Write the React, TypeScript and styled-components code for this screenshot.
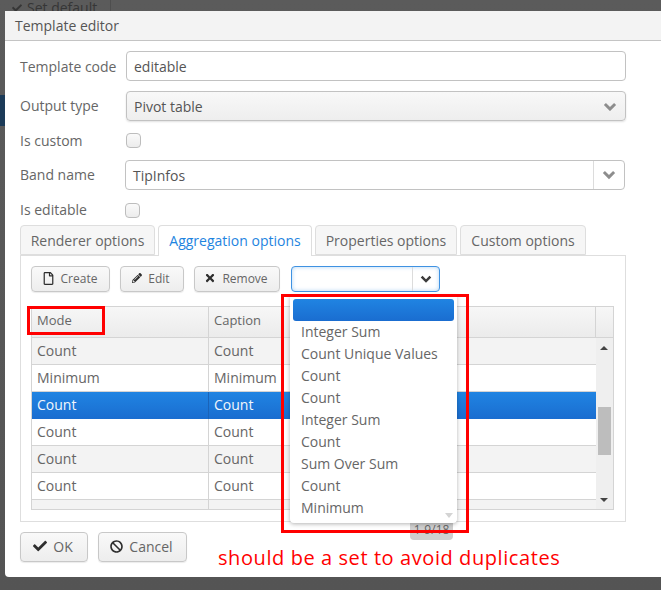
import React from "react";
import styled, { createGlobalStyle } from "styled-components";
import { FaRegFile, FaPencilAlt, FaTimes, FaCheck, FaBan } from "react-icons/fa";

const Global = createGlobalStyle`
  html, body { margin: 0; padding: 0; background: #555; }
  * { box-sizing: border-box; }
`;

const Page = styled.div`
  position: relative;
  width: 661px;
  height: 590px;
  overflow: hidden;
  background: linear-gradient(#5b5b5b, #545454);
  font-family: "Open Sans", sans-serif;
  font-size: 14px;
  color: #555;
`;

const Behind = styled.div`
  display: flex;
  align-items: flex-start;
  gap: 5px;
  width: 111px;
  height: 11px;
  padding-left: 12px;
  overflow: hidden;
  color: #363636;
  font-size: 14px;
  line-height: 16px;
  border-right: 1px solid #4e4e4e;
  svg { margin-top: 3px; flex: none; }
`;

const BehindBand = styled.div`
  position: absolute;
  left: 0;
  top: 95px;
  width: 5px;
  height: 31px;
  background: #1c3b58;
`;

const Dialog = styled.div`
  position: absolute;
  left: 5px;
  top: 11px;
  width: 660px;
  height: 566px;
  background: #fff;
  border-radius: 4px 0 0 4px;
  display: flex;
  flex-direction: column;
`;

const Header = styled.div`
  height: 30px;
  flex: none;
  background: #f3f3f3;
  border-bottom: 1px solid #c4c4c4;
  padding-left: 10px;
  line-height: 29px;
  color: #555;
  font-size: 14px;
`;

const Body = styled.div`
  width: 621px;
  padding: 10px 0 0 15px;
  display: flex;
  flex-direction: column;
`;

const Row = styled.div<{ $h: number; $gap?: number }>`
  display: flex;
  align-items: center;
  height: ${(p) => p.$h}px;
  margin-bottom: ${(p) => p.$gap ?? 10}px;
`;

const Label = styled.div<{ $w?: number; $raise?: boolean }>`
  width: ${(p) => p.$w ?? 106}px;
  flex: none;
  color: #666;
  line-height: 19px;
  margin-bottom: ${(p) => (p.$raise ? 2 : 0)}px;
`;

const Field = styled.div`
  width: 500px;
  height: 30px;
  border: 1px solid #c2c2c2;
  border-radius: 4px;
  background: #fff;
  padding: 1px 0 0 7px;
  line-height: 28px;
  color: #555;
  font-size: 14px;
`;

const SelectField = styled(Field)`
  display: flex;
  justify-content: space-between;
  align-items: center;
  padding: 1px 8px 0 7px;
  background: linear-gradient(#f8f8f8, #eeeeee);
  box-shadow: 0 1px 2px rgba(0, 0, 0, 0.12);
  color: #8d8d8d;
`;

const SelectText = styled.span`
  color: #555;
`;

const ComboField = styled(Field)`
  display: flex;
  justify-content: space-between;
  padding-right: 0;
  padding-top: 0;
`;

const ComboValue = styled.span`
  padding-top: 1px;
`;

const ComboButton = styled.div`
  width: 31px;
  border-left: 1px solid #dcdcdc;
  display: flex;
  align-items: center;
  justify-content: center;
  color: #8d8d8d;
`;

const Check = styled.div`
  width: 15px;
  height: 15px;
  border: 1px solid #bdbdbd;
  border-radius: 4px;
  background: linear-gradient(#fafafa, #ececec);
`;

const Tabs = styled.div`
  display: flex;
  gap: 3px;
  height: 31px;
  position: relative;
  z-index: 1;
`;

const Tab = styled.div<{ $active?: boolean; $w: number }>`
  width: ${(p) => p.$w}px;
  height: ${(p) => (p.$active ? 31 : 30)}px;
  text-align: center;
  line-height: 30px;
  border: 1px solid #dedede;
  border-bottom: ${(p) => (p.$active ? "none" : "1px solid #dedede")};
  border-radius: 4px 4px 0 0;
  background: ${(p) => (p.$active ? "#fff" : "#f6f6f6")};
  color: ${(p) => (p.$active ? "#1e84e0" : "#666")};
`;

const Panel = styled.div`
  position: relative;
  margin-top: -1px;
  width: 606px;
  height: 267px;
  border: 1px solid #dedede;
  padding: 10px;
`;

const Toolbar = styled.div`
  display: flex;
  gap: 10px;
  height: 26px;
  margin-bottom: 14px;
`;

const Btn = styled.div<{ $w: number; $h?: number; $fs?: number }>`
  width: ${(p) => p.$w}px;
  height: ${(p) => p.$h ?? 26}px;
  display: flex;
  align-items: center;
  justify-content: center;
  gap: 6px;
  padding: 0 2px 2px 0;
  border: 1px solid #c8c8c8;
  border-radius: 4px;
  background: linear-gradient(#f9f9f9, #ededed);
  box-shadow: 0 1px 1px rgba(0, 0, 0, 0.08);
  color: #666;
  font-size: ${(p) => p.$fs ?? 12}px;
  svg { color: #2e2e2e; flex: none; }
`;

const ComboWrap = styled.div`
  position: relative;
  width: 149px;
  height: 26px;
  margin-left: 1px;
  display: flex;
  border: 1px solid #3f92e2;
  border-radius: 4px;
  box-shadow: inset 0 0 4px rgba(30, 132, 224, 0.35);
`;

const ComboBlank = styled.div`
  flex: 1;
`;

const ComboToggle = styled.div`
  width: 27px;
  border-left: 1px solid #dcdcdc;
  display: flex;
  align-items: center;
  justify-content: center;
  color: #3c3c3c;
`;

const Dropdown = styled.div`
  position: absolute;
  left: -2px;
  top: 29px;
  width: 167px;
  height: 227px;
  z-index: 3;
  background: #fff;
  border-radius: 0 0 4px 4px;
  box-shadow: 0 1px 4px rgba(0, 0, 0, 0.3);
  padding: 3px;
`;

const Blank = styled.div`
  height: 22px;
  border-radius: 3px;
  background: linear-gradient(#2084e2, #1a6dd0);
`;

const Option = styled.div`
  height: 22px;
  line-height: 22px;
  padding-left: 8px;
  color: #666;
  white-space: nowrap;
`;

const MoreArrow = styled.div`
  position: absolute;
  right: 4px;
  bottom: 5px;
  border: 4px solid transparent;
  border-top: 5px solid #d4d4d4;
  border-bottom: 0;
`;

const Table = styled.div`
  width: 583px;
  height: 204px;
  border: 1px solid #d4d4d4;
  display: grid;
  grid-template-columns: 177px 1fr 17px;
  grid-template-rows: 31px 1fr;
  overflow: hidden;
`;

const HeadCell = styled.div<{ $line?: boolean }>`
  background: linear-gradient(#f7f7f7, #ebebeb);
  border-bottom: 1px solid #d4d4d4;
  border-right: ${(p) => (p.$line ? "1px solid #d4d4d4" : "none")};
  padding-left: 5px;
  line-height: 27px;
  color: #666;
  font-size: 13px;
`;

const Rows = styled.div`
  grid-column: 1 / 3;
  overflow: hidden;
`;

const DataRow = styled.div<{ $kind: "odd" | "even" | "sel"; $h?: number }>`
  display: grid;
  grid-template-columns: 177px 1fr;
  height: ${(p) => p.$h ?? 27}px;
  border-bottom: ${(p) => (p.$kind === "sel" ? "none" : "1px solid #d4d4d4")};
  background: ${(p) =>
    p.$kind === "sel" ? "linear-gradient(#2084e2, #1a6dd0)" : p.$kind === "odd" ? "#f3f3f3" : "#fff"};
  color: ${(p) => (p.$kind === "sel" ? "#f2f6fb" : "#666")};
  line-height: 26px;
`;

const DataCell = styled.div<{ $line?: string }>`
  padding-left: 5px;
  border-right: ${(p) => (p.$line ? `1px solid ${p.$line}` : "none")};
`;

const Scroll = styled.div`
  position: relative;
  background: #efefef;
`;

const Thumb = styled.div`
  position: absolute;
  left: 2px;
  top: 69px;
  width: 13px;
  height: 48px;
  background: #bdbdbd;
`;

const ArrowUp = styled.div`
  position: absolute;
  left: 4px;
  top: 8px;
  border: 4px solid transparent;
  border-bottom: 4px solid #444;
  border-top: 0;
`;

const ArrowDown = styled.div`
  position: absolute;
  left: 4px;
  bottom: 7px;
  border: 4px solid transparent;
  border-top: 4px solid #444;
  border-bottom: 0;
`;

const Pager = styled.div`
  position: absolute;
  right: 172px;
  bottom: -19px;
  width: 43px;
  height: 18px;
  background: #cfcfcf;
  border-radius: 0 0 4px 4px;
  text-align: center;
  font-size: 12px;
  line-height: 16px;
  color: #666;
`;

const Footer = styled.div`
  display: flex;
  gap: 10px;
  margin-top: 10px;
`;

const RedBox = styled.div<{ $x: number; $y: number; $w: number; $h: number }>`
  position: absolute;
  left: ${(p) => p.$x}px;
  top: ${(p) => p.$y}px;
  width: ${(p) => p.$w}px;
  height: ${(p) => p.$h}px;
  border: 3px solid #ff0000;
  z-index: 5;
`;

const Note = styled.div`
  position: absolute;
  left: 218px;
  top: 544px;
  z-index: 5;
  color: #ff0000;
  font-size: 20px;
  letter-spacing: 0.58px;
  line-height: 28px;
  white-space: nowrap;
`;

const Chevron = ({ w = 14 }: { w?: number }) => (
  <svg width={w} height={w * 0.7} viewBox="0 0 14 10" fill="none" aria-hidden="true">
    <path d="M1.8 2 L7 7.2 L12.2 2" stroke="currentColor" strokeWidth="3" />
  </svg>
);

const options = ["Integer Sum", "Count Unique Values", "Count", "Count", "Integer Sum", "Count", "Sum Over Sum", "Count", "Minimum"];

const rows: { mode: string; kind: "odd" | "even" | "sel"; h?: number }[] = [
  { mode: "Count", kind: "odd" },
  { mode: "Minimum", kind: "even" },
  { mode: "Count", kind: "sel" },
  { mode: "Count", kind: "even" },
  { mode: "Count", kind: "odd" },
  { mode: "Count", kind: "even" },
  { mode: "", kind: "odd", h: 10 },
];

export default function App() {
  return (
    <Page>
      <Global />
      <Behind>
        <FaCheck size={10} /> Set default
      </Behind>
      <BehindBand />
      <Dialog>
        <Header>Template editor</Header>
        <Body>
          <Row $h={30}>
            <Label>Template code</Label>
            <Field>editable</Field>
          </Row>
          <Row $h={30}>
            <Label $raise>Output type</Label>
            <SelectField>
              <SelectText>Pivot table</SelectText>
              <Chevron />
            </SelectField>
          </Row>
          <Row $h={19}>
            <Label>Is custom</Label>
            <Check />
          </Row>
          <Row $h={30}>
            <Label $w={105} $raise>
              Band name
            </Label>
            <ComboField>
              <ComboValue>TipInfos</ComboValue>
              <ComboButton>
                <Chevron />
              </ComboButton>
            </ComboField>
          </Row>
          <Row $h={20} $gap={5}>
            <Label $w={105} $raise>
              Is editable
            </Label>
            <Check />
          </Row>
          <Tabs>
            <Tab $w={135}>Renderer options</Tab>
            <Tab $w={154} $active>
              Aggregation options
            </Tab>
            <Tab $w={142}>Properties options</Tab>
            <Tab $w={126}>Custom options</Tab>
          </Tabs>
          <Panel>
            <Toolbar>
              <Btn $w={79}>
                <FaRegFile size={13} /> Create
              </Btn>
              <Btn $w={64}>
                <FaPencilAlt size={10} /> Edit
              </Btn>
              <Btn $w={86}>
                <FaTimes size={12} /> Remove
              </Btn>
              <ComboWrap>
                <ComboBlank />
                <ComboToggle>
                  <Chevron w={12} />
                </ComboToggle>
                <Dropdown>
                  <Blank />
                  {options.map((o, i) => (
                    <Option key={i}>{o}</Option>
                  ))}
                  <MoreArrow />
                </Dropdown>
              </ComboWrap>
            </Toolbar>
            <Table>
              <HeadCell $line>Mode</HeadCell>
              <HeadCell $line>Caption</HeadCell>
              <HeadCell />
              <Rows>
                {rows.map((r, i) => (
                  <DataRow key={i} $kind={r.kind} $h={r.h}>
                    <DataCell $line={r.kind === "sel" ? "#1a63b8" : "#d4d4d4"}>{r.mode}</DataCell>
                    <DataCell>{r.mode}</DataCell>
                  </DataRow>
                ))}
              </Rows>
              <Scroll>
                <ArrowUp />
                <Thumb />
                <ArrowDown />
              </Scroll>
            </Table>
            <Pager>1-9/18</Pager>
          </Panel>
          <Footer>
            <Btn $w={68} $h={30} $fs={14}>
              <FaCheck size={14} /> OK
            </Btn>
            <Btn $w={89} $h={30} $fs={14}>
              <FaBan size={13} /> Cancel
            </Btn>
          </Footer>
        </Body>
      </Dialog>
      <RedBox $x={27} $y={306} $w={78} $h={29} />
      <RedBox $x={281} $y={294} $w={188} $h={239} />
      <Note>should be a set to avoid duplicates</Note>
    </Page>
  );
}
